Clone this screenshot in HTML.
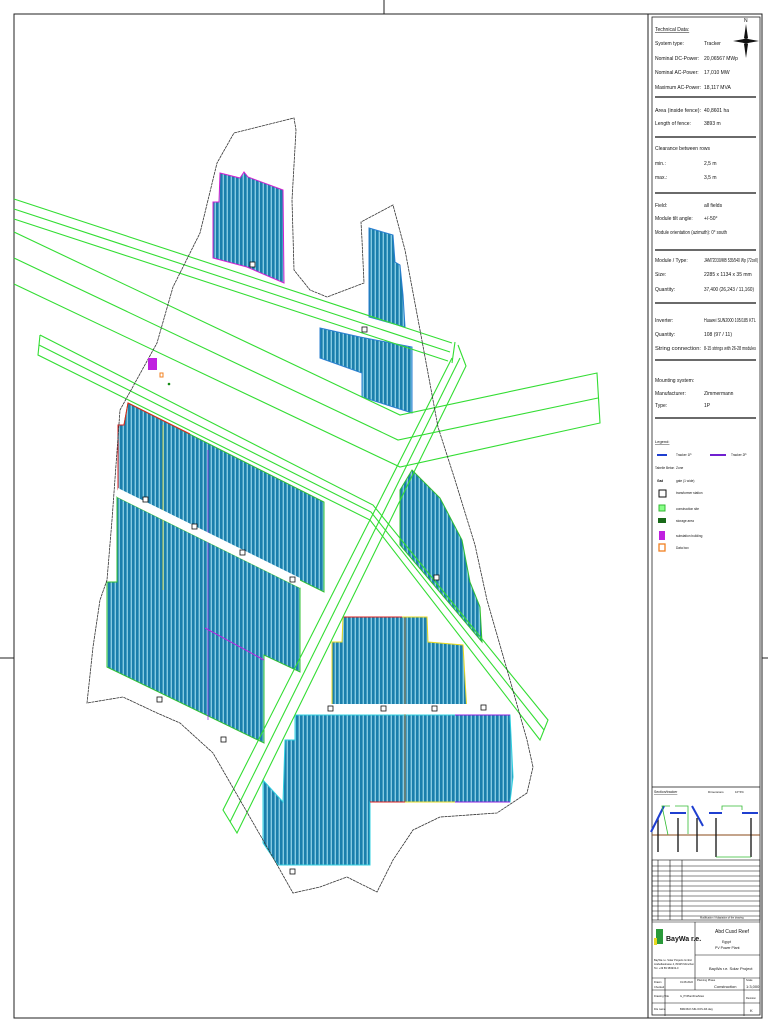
<!DOCTYPE html>
<html><head><meta charset="utf-8"><style>
html,body{margin:0;padding:0;background:#fff;}
svg{display:block;}
text{font-family:"Liberation Sans",sans-serif;fill:#111;}
</style></head><body>
<svg width="768" height="1024" viewBox="0 0 768 1024" xmlns="http://www.w3.org/2000/svg">
<defs>
<pattern id="pv" width="4" height="10" patternUnits="userSpaceOnUse">
<rect width="4" height="10" fill="#1b7fac"/>
<rect x="2.6" width="1.4" height="10" fill="#86cbe2"/>
</pattern>
</defs>
<rect width="768" height="1024" fill="#fff"/>
<rect x="14" y="14" width="748" height="1004" fill="none" stroke="#222" stroke-width="1"/>
<line x1="0" y1="658" x2="14" y2="658" stroke="#222"/>
<line x1="762" y1="658" x2="768" y2="658" stroke="#222"/>
<line x1="384" y1="0" x2="384" y2="14" stroke="#222"/>
<line x1="648" y1="14" x2="648" y2="1018" stroke="#222"/>
<rect x="652" y="17" width="108" height="998" fill="none" stroke="#222" stroke-width="0.8"/>

<g stroke-width="1">
<polygon points="220,173 240,178 244,172 248,177 283,190 284,283 247,267 213,258 213,202 219,202" fill="url(#pv)" stroke="#d020d0"/>
<polygon points="369,228 393,235 395,262 400,265 403,295 405,327 369,317" fill="url(#pv)" stroke="#2a7fd0"/>
<polygon points="320,328 360,337 412,347 412,413 362,397 362,373 320,358" fill="url(#pv)" stroke="#2a7fd0"/>
<polygon points="128,403 324,502 324,592 118,490 118,425 124,425" fill="url(#pv)" stroke="#30c030"/>
<polyline points="118,490 118,425 124,425 128,403 190,434" fill="none" stroke="#e02020"/>
<polygon points="117,497 300,588 300,672 264,655 264,743 107,667 107,582 117,582" fill="url(#pv)" stroke="#30c030"/>
<line x1="205" y1="628" x2="264" y2="660" stroke="#c020e0"/>
<polygon points="412,470 440,498 462,540 470,582 480,607 482,642 400,545 400,490" fill="url(#pv)" stroke="#30c030"/>
<polygon points="343,617 427,617 428,642 463,645 467,713 332,705 332,642 342,642" fill="url(#pv)" stroke="#e8d820"/>
<line x1="343" y1="617" x2="402" y2="617" stroke="#e02020"/>
<polygon points="295,715 510,715 513,777 510,802 370,802 370,865 278,865 263,843 263,780 283,802 285,740 295,740" fill="url(#pv)" stroke="#30d0e0"/>
<line x1="370" y1="802" x2="405" y2="802" stroke="#e02020"/>
<line x1="405" y1="802" x2="455" y2="802" stroke="#e8d820"/>
<line x1="455" y1="802" x2="510" y2="802" stroke="#9020e0"/>
<line x1="455" y1="715" x2="510" y2="715" stroke="#9020e0"/>
<line x1="405" y1="617" x2="405" y2="802" stroke="#e08020" stroke-width="0.7"/>
<line x1="163" y1="425" x2="163" y2="590" stroke="#e8d820" stroke-width="0.7"/>
<line x1="208" y1="450" x2="208" y2="720" stroke="#9020e0" stroke-width="0.7"/>
</g>
<polygon points="118,488 300,578 300,588 117,497" fill="#fff"/>
<rect x="330" y="704" width="140" height="10" fill="#fff"/>

<g fill="none" stroke="#33dd33" stroke-width="1.1">
<polyline points="14,199 452,343"/>
<polyline points="14,209 450,352"/>
<polyline points="14,219 448,361"/>
<polyline points="455,342 452,363"/>
<polyline points="14,232 400,415 597,373 600,423 400,467 14,284"/>
<polyline points="14,258 398,440 598,398"/>
<polyline points="40,335 373,505 548,720 540,740 370,520 38,355 40,335"/>
<polyline points="39,345 371,512 544,730"/>
<polyline points="458,345 466,366 237,833 223,810 452,358"/>
<polyline points="460,358 230,822"/>
</g>

<polyline points="234,133 294,118 296,130 292,200 294,270 310,290 327,297 364,283 362,240 361,222 393,205 405,250 420,330 438,427 455,480 475,545 487,600 510,680 527,740 533,767 527,793 497,813 440,817 413,830 393,860 377,892 347,877 320,887 293,893 267,847 240,800 213,753 180,723 157,713 123,697 87,703 93,647 100,600 107,580 112,520 120,410 157,343 173,287 200,233 217,163 234,133" fill="none" stroke="#333" stroke-width="0.8" stroke-dasharray="3,0.6"/>

<g fill="#fff" stroke="#111" stroke-width="0.8">
<rect x="250" y="262" width="5" height="5"/><rect x="362" y="327" width="5" height="5"/>
<rect x="143" y="497" width="5" height="5"/><rect x="192" y="524" width="5" height="5"/>
<rect x="240" y="550" width="5" height="5"/><rect x="290" y="577" width="5" height="5"/>
<rect x="434" y="575" width="5" height="5"/><rect x="157" y="697" width="5" height="5"/>
<rect x="221" y="737" width="5" height="5"/><rect x="328" y="706" width="5" height="5"/>
<rect x="381" y="706" width="5" height="5"/><rect x="432" y="706" width="5" height="5"/>
<rect x="481" y="705" width="5" height="5"/><rect x="290" y="869" width="5" height="5"/>
</g>
<rect x="148" y="358" width="9" height="12" fill="#c020e0"/>
<rect x="160" y="373" width="3" height="4" fill="none" stroke="#f08020"/>
<circle cx="169" cy="384" r="1.3" fill="#138a13"/>

<g font-size="5">
<text x="655" y="31" text-decoration="underline">Technical Data:</text>
<text x="655" y="45">System type:</text><text x="704" y="45">Tracker</text>
<text x="655" y="60">Nominal DC-Power:</text><text x="704" y="60">20,06567 MWp</text>
<text x="655" y="74">Nominal AC-Power:</text><text x="704" y="74">17,010 MW</text>
<text x="655" y="89" textLength="46" lengthAdjust="spacingAndGlyphs">Maximum AC-Power:</text><text x="704" y="89">18,117 MVA</text>
<text x="655" y="112" textLength="46" lengthAdjust="spacingAndGlyphs">Area (inside fence):</text><text x="704" y="112">40,8601 ha</text>
<text x="655" y="125">Length of fence:</text><text x="704" y="125">3893 m</text>
<text x="655" y="150">Clearance between rows</text>
<text x="655" y="165">min.:</text><text x="704" y="165">2,5 m</text>
<text x="655" y="179">max.:</text><text x="704" y="179">3,5 m</text>
<text x="655" y="207">Field:</text><text x="704" y="207">all fields</text>
<text x="655" y="220">Module tilt angle:</text><text x="704" y="220">+/-50°</text>
<text x="655" y="234" textLength="72" lengthAdjust="spacingAndGlyphs">Module orientation (azimuth): 0° south</text>
<text x="655" y="262">Module / Type:</text><text x="704" y="262" textLength="54" lengthAdjust="spacingAndGlyphs">JAM72D30/MB 535/540 Wp (72cell)</text>
<text x="655" y="276">Size:</text><text x="704" y="276">2285 x 1134 x 35 mm</text>
<text x="655" y="291">Quantity:</text><text x="704" y="291" textLength="50" lengthAdjust="spacingAndGlyphs">37,400 (26,243 / 11,160)</text>
<text x="655" y="322">Inverter:</text><text x="704" y="322" textLength="52" lengthAdjust="spacingAndGlyphs">Huawei SUN2000 105/185 KTL</text>
<text x="655" y="336">Quantity:</text><text x="704" y="336">108 (97 / 11)</text>
<text x="655" y="350" textLength="46" lengthAdjust="spacingAndGlyphs">String connection:</text><text x="704" y="350" textLength="52" lengthAdjust="spacingAndGlyphs">8-15 strings with 26-28 modules</text>
<text x="655" y="382">Mounting system:</text>
<text x="655" y="395">Manufacturer:</text><text x="704" y="395">Zimmermann</text>
<text x="655" y="407">Type:</text><text x="704" y="407">1P</text>
</g>
<g stroke="#111" stroke-width="1.2">
<line x1="655" y1="97" x2="756" y2="97"/><line x1="655" y1="137" x2="756" y2="137"/>
<line x1="655" y1="193" x2="756" y2="193"/><line x1="655" y1="250" x2="756" y2="250"/>
<line x1="655" y1="303" x2="756" y2="303"/><line x1="655" y1="360" x2="756" y2="360"/>
<line x1="655" y1="418" x2="756" y2="418"/>
</g>
<g fill="#111">
<polygon points="746,24 748,38 744,38"/><polygon points="746,58 748,44 744,44"/>
<polygon points="733,41 744,39 744,43"/><polygon points="759,41 748,39 748,43"/>
<circle cx="746" cy="41" r="3"/>
<text x="744" y="22" font-size="5">N</text>
</g>

<g font-size="3.2">
<text x="655" y="443" font-size="4" text-decoration="underline">Legend:</text>
<rect x="657" y="454" width="10" height="2" fill="#1f3fd0"/><text x="676" y="456">Tracker 1P</text>
<rect x="710" y="454" width="16" height="2" fill="#7020d0"/><text x="731" y="456">Tracker 2P</text>
<text x="655" y="469">Tabelle Beton</text><text x="676" y="469">Zone</text>
<text x="657" y="482" font-weight="bold">Gad</text><text x="676" y="482">gate (1 wide)</text>
<rect x="659" y="490" width="7" height="7" fill="#fff" stroke="#111"/><text x="676" y="494">transformer station</text>
<rect x="659" y="505" width="6" height="6" fill="#8f8" stroke="#3b3"/><text x="676" y="510">construction site</text>
<rect x="658" y="518" width="8" height="5" fill="#196a19"/><text x="676" y="522">storage area</text>
<rect x="659" y="531" width="6" height="9" fill="#c020e0"/><text x="676" y="537">substation building</text>
<rect x="659" y="544" width="6" height="7" fill="#fff" stroke="#f08020" stroke-width="1.3"/><text x="676" y="549">Data box</text>
</g>

<line x1="652" y1="787" x2="760" y2="787" stroke="#111" stroke-width="0.8"/>
<text x="654" y="793" font-size="3.5" text-decoration="underline">Section/tracker</text>
<text x="708" y="793" font-size="3">Dimensions</text><text x="735" y="793" font-size="3">1P 5%</text>
<line x1="652" y1="835" x2="760" y2="835" stroke="#8a4a1a" stroke-width="1"/>
<g stroke="#111" stroke-width="1.3">
<line x1="658" y1="818" x2="658" y2="852"/><line x1="678" y1="818" x2="678" y2="852"/>
<line x1="697" y1="818" x2="697" y2="852"/><line x1="716" y1="818" x2="716" y2="857"/>
<line x1="751" y1="818" x2="751" y2="857"/>
</g>
<g stroke="#1f3fd0" stroke-width="2">
<line x1="651" y1="832" x2="664" y2="806"/><line x1="670" y1="813" x2="686" y2="813"/>
<line x1="692" y1="806" x2="703" y2="826"/><line x1="709" y1="813" x2="722" y2="813"/>
<line x1="742" y1="813" x2="758" y2="813"/>
</g>
<g fill="none" stroke="#3b3" stroke-width="0.8">
<polyline points="668,835 662,806 670,806"/><polyline points="675,806 688,806 688,834"/>
<polyline points="722,810 722,806 742,806 742,810"/><line x1="716" y1="857" x2="751" y2="857"/>
</g>
<g stroke="#111" stroke-width="0.6" fill="none">
<rect x="652" y="860" width="108" height="60"/>
<line x1="658" y1="860" x2="658" y2="920"/><line x1="670" y1="860" x2="670" y2="920"/>
<line x1="682" y1="860" x2="682" y2="920"/>
<line x1="652" y1="866" x2="760" y2="866"/><line x1="652" y1="871" x2="760" y2="871"/>
<line x1="652" y1="876" x2="760" y2="876"/><line x1="652" y1="881" x2="760" y2="881"/>
<line x1="652" y1="886" x2="760" y2="886"/><line x1="652" y1="891" x2="760" y2="891"/>
<line x1="652" y1="896" x2="760" y2="896"/><line x1="652" y1="901" x2="760" y2="901"/>
<line x1="652" y1="906" x2="760" y2="906"/><line x1="652" y1="911" x2="760" y2="911"/>
<line x1="652" y1="916" x2="760" y2="916"/>
<line x1="695" y1="922" x2="695" y2="978"/>
<line x1="652" y1="922" x2="760" y2="922"/>
<line x1="695" y1="955" x2="760" y2="955"/>
<line x1="652" y1="978" x2="760" y2="978"/>
<line x1="652" y1="990" x2="760" y2="990"/>
<line x1="652" y1="1003" x2="760" y2="1003"/>
<line x1="744" y1="978" x2="744" y2="1016"/>
<line x1="695" y1="978" x2="695" y2="990"/>
<line x1="665" y1="978" x2="665" y2="1016"/>
</g>
<text x="700" y="918.5" font-size="2.5">Modification / Adaptation of the drawing</text>
<rect x="656" y="929" width="7" height="15" fill="#2a9a3a"/>
<rect x="654" y="938" width="3" height="7" fill="#e8d820"/>
<text x="666" y="941" font-size="7" font-weight="bold" fill="#334">BayWa r.e.</text>
<g font-size="2.6">
<text x="654" y="961">BayWa r.e. Solar Projects GmbH</text>
<text x="654" y="965">Arabellastrasse 4, 81925 München</text>
<text x="654" y="969">Tel. +49 89 383932-0</text>
<text x="654" y="983">Drawn</text><text x="654" y="988">Checked</text>
<text x="680" y="983">01.08.2022</text>
<text x="654" y="997">Drawing Title</text><text x="680" y="997">G_PVPlantFinalView</text>
<text x="654" y="1010">File name</text><text x="680" y="1010">BRR-BAY-SIN-OOS-DZ.dwg</text>
<text x="697" y="981">Planning Phase</text><text x="746" y="981">Scale</text>
<text x="746" y="999">Revision</text>
</g>
<text x="715" y="933" font-size="5">Abd Cusd Reef</text>
<text x="722" y="943" font-size="3.5">Egypt</text>
<text x="715" y="949" font-size="3.5">PV Power Plant</text>
<text x="709" y="970" font-size="4">BayWa r.e. Solar Project</text>
<text x="714" y="988" font-size="4">Construction</text>
<text x="746" y="988" font-size="4">1:3,000</text>
<text x="750" y="1012" font-size="4">K</text>
</svg>
</body></html>
